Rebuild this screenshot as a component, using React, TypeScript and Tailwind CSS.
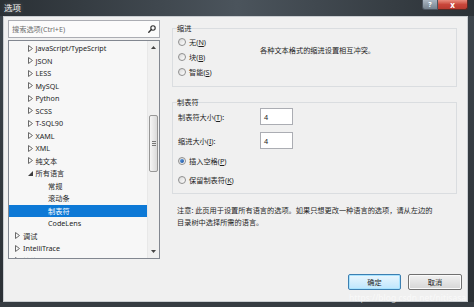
import React from 'react';

type Row = { text: string; level: number; arrow?: 'closed' | 'open'; selected?: boolean };

const rows: Row[] = [
  { text: 'JavaScript/TypeScript', level: 1, arrow: 'closed' },
  { text: 'JSON', level: 1, arrow: 'closed' },
  { text: 'LESS', level: 1, arrow: 'closed' },
  { text: 'MySQL', level: 1, arrow: 'closed' },
  { text: 'Python', level: 1, arrow: 'closed' },
  { text: 'SCSS', level: 1, arrow: 'closed' },
  { text: 'T-SQL90', level: 1, arrow: 'closed' },
  { text: 'XAML', level: 1, arrow: 'closed' },
  { text: 'XML', level: 1, arrow: 'closed' },
  { text: '纯文本', level: 1, arrow: 'closed' },
  { text: '所有语言', level: 1, arrow: 'open' },
  { text: '常规', level: 2 },
  { text: '滚动条', level: 2 },
  { text: '制表符', level: 2, selected: true },
  { text: 'CodeLens', level: 2 },
  { text: '调试', level: 0, arrow: 'closed' },
  { text: 'IntelliTrace', level: 0, arrow: 'closed' },
  { text: '性能工具', level: 0, arrow: 'closed' },
];

const FONT = { fontFamily: '"Noto Sans", "Noto Sans CJK SC", sans-serif' };

const Arrow = ({ kind, selected }: { kind?: 'closed' | 'open'; selected?: boolean }) => {
  if (kind === 'closed') {
    return (
      <svg width="5" height="7" viewBox="0 0 5 7" className="shrink-0">
        <path d="M0.5 0.5 L4.5 3.5 L0.5 6.5 Z" fill="none" stroke={selected ? '#fff' : '#6a6a6a'} strokeWidth="1" />
      </svg>
    );
  }
  if (kind === 'open') {
    return (
      <svg width="5" height="5" viewBox="0 0 5 5" className="shrink-0">
        <path d="M5 0 L5 5 L0 5 Z" fill="#3c3c3c" />
      </svg>
    );
  }
  return <span className="w-[5px] shrink-0" />;
};

const Radio = ({ checked }: { checked?: boolean }) => (
  <span className="relative flex h-[8px] w-[8px] shrink-0 items-center justify-center rounded-full border border-[#8f8f8f] bg-gradient-to-br from-[#d8d8d8] to-[#ffffff]">
    {checked && <span className="h-[4px] w-[4px] rounded-full bg-gradient-to-br from-[#5fa0e6] to-[#1c4f9b]" />}
  </span>
);

const RadioRow = ({ label, mnemonic, checked, className }: { label: string; mnemonic: string; checked?: boolean; className?: string }) => (
  <div className={`flex h-[15px] items-center gap-[3px] ${className ?? ''}`}>
    <Radio checked={checked} />
    <span>
      {label}(<span className="underline">{mnemonic}</span>)
    </span>
  </div>
);

export default function App() {
  return (
    <div className="relative flex h-[307px] w-[474px] flex-col overflow-hidden bg-[#2f353b] text-[7.2px] leading-[10px] text-[#1e1e1e]" style={FONT}>
      {/* title bar */}
      <div className="flex h-[16px] shrink-0 items-start justify-between bg-gradient-to-r from-[#2a3035] via-[#4b545c] to-[#2c3237]">
        <span className="pl-[4px] pt-[3px] text-[8.5px] leading-[10px] text-[#f2f2f2] [text-shadow:0_0_4px_rgba(255,255,255,0.35)]">选项</span>
        <div className="mr-[6px] flex h-[10px]">
          <div className="flex w-[16px] items-center justify-center rounded-bl-[3px] border border-t-0 border-[#4c5560] bg-gradient-to-b from-[#aab6c2] to-[#76838f] text-[7px] font-bold leading-none text-white">?</div>
          <div className="flex w-[30px] items-center justify-center rounded-br-[3px] border border-l-0 border-t-0 border-[#5a2a25] bg-gradient-to-b from-[#e88c7e] via-[#c9463a] to-[#b83a2f] text-[8px] font-bold leading-none text-white">x</div>
        </div>
      </div>

      <div className="flex h-[286px] shrink-0">
        <div className="w-[3px] bg-gradient-to-b from-[#3e464d] to-[#2b3035]" />

        {/* client area */}
        <div className="flex w-[465px] border border-[#c9cdd1] bg-[#f0f0f0]">
          {/* left column */}
          <div className="ml-[4px] flex w-[152px] flex-col pt-[3px]">
            <div className="flex h-[18px] items-center justify-between border border-[#abadb3] bg-[#fbfbfb] pl-[3px] pr-[3px]">
              <span className="text-[#6d6d6d]">搜索选项(Ctrl+E)</span>
              <svg width="8" height="8" viewBox="0 0 8 8">
                <circle cx="5" cy="3" r="2.2" fill="none" stroke="#2f2f2f" strokeWidth="1.1" />
                <path d="M3.4 4.6 L0.8 7.2" stroke="#2f2f2f" strokeWidth="1.4" strokeLinecap="round" />
              </svg>
            </div>
            <div className="mt-[2px] flex h-[219px] border border-[#828790] bg-[#f7f7f7]">
              <div className="flex flex-1 flex-col overflow-hidden pt-[1px]">
                {rows.map((r, i) => (
                  <div
                    key={i}
                    className={`flex h-[12.5px] shrink-0 items-center gap-[3px] ${r.selected ? 'bg-[#0d79d6] text-white' : ''}`}
                    style={{ paddingLeft: 6 + r.level * 12.5 }}
                  >
                    <Arrow kind={r.arrow} selected={r.selected} />
                    <span className="whitespace-nowrap">{r.text}</span>
                  </div>
                ))}
              </div>
              {/* scrollbar */}
              <div className="flex w-[12px] flex-col items-center border-l border-[#e8e8e8] bg-[#f0f0f0]">
                <svg width="5" height="3" viewBox="0 0 5 3" className="mt-[5px]">
                  <path d="M0 3 L2.5 0 L5 3 Z" fill="#444" />
                </svg>
                <div className="mt-[66px] flex h-[57px] w-[9px] flex-col items-center justify-center gap-[1px] rounded-[2px] border border-[#979797] bg-gradient-to-r from-[#f6f6f6] to-[#dadada]">
                  <span className="h-px w-[4px] bg-[#777]" />
                  <span className="h-px w-[4px] bg-[#777]" />
                  <span className="h-px w-[4px] bg-[#777]" />
                </div>
                <div className="flex-1" />
                <svg width="5" height="3" viewBox="0 0 5 3" className="mb-[5px]">
                  <path d="M0 0 L2.5 3 L5 0 Z" fill="#444" />
                </svg>
              </div>
            </div>
          </div>

          {/* right column */}
          <div className="ml-[12px] flex w-[290px] flex-col pt-[6px] pb-[11px]">
            <fieldset className="h-[64px] w-[285px] border border-[#dadde0] px-[4px]">
              <legend className="px-0 leading-[10px]">缩进</legend>
              <div className="flex pl-[1px]">
                <div className="flex w-[82px] flex-col pt-[1.5px]">
                  <RadioRow label="无" mnemonic="N" className="h-[15.5px]" />
                  <RadioRow label="块" mnemonic="B" className="h-[15.5px]" />
                  <RadioRow label="智能" mnemonic="S" className="h-[15.5px]" />
                </div>
                <div className="pt-[12px]">各种文本格式的缩进设置相互冲突。</div>
              </div>
            </fieldset>

            <fieldset className="mt-[10px] h-[97px] w-[285px] border border-[#dadde0] px-[4px]">
              <legend className="px-0 leading-[10px]">制表符</legend>
              <div className="flex flex-col pl-[1px]">
                <div className="mt-[1px] flex h-[17px] items-center">
                  <span className="w-[82px]">
                    制表符大小(<span className="underline">T</span>):
                  </span>
                  <div className="flex h-[17px] w-[33px] items-center border border-[#abadb3] bg-white pl-[3px]">4</div>
                </div>
                <div className="mt-[7px] flex h-[17px] items-center">
                  <span className="w-[82px]">
                    缩进大小(<span className="underline">I</span>):
                  </span>
                  <div className="flex h-[17px] w-[33px] items-center border border-[#abadb3] bg-white pl-[3px]">4</div>
                </div>
                <RadioRow label="插入空格" mnemonic="P" checked className="mt-[4.5px]" />
                <RadioRow label="保留制表符" mnemonic="K" className="mt-[4px]" />
              </div>
            </fieldset>

            <div className="mt-[10px] pl-[5px] leading-[12px]">
              <div>注意: 此页用于设置所有语言的选项。如果只想更改一种语言的选项，请从左边的</div>
              <div>目录树中选择所需的语言。</div>
            </div>

            <div className="flex-1" />

            <div className="flex justify-end gap-[7px]">
              <button className="flex h-[16px] w-[53px] items-center justify-center rounded-[2px] border border-[#3c7fb1] bg-gradient-to-b from-[#eaf6fd] to-[#bee6fd] shadow-[inset_0_0_0_1px_#a8e3ff]">确定</button>
              <button className="flex h-[16px] w-[54px] items-center justify-center rounded-[2px] border border-[#707070] bg-gradient-to-b from-[#f2f2f2] to-[#d6d6d6] shadow-[inset_0_0_0_1px_#fbfbfb]">取消</button>
            </div>
          </div>
        </div>

        <div className="w-[6px] bg-gradient-to-b from-[#3e464d] to-[#2b3035]" />
      </div>

      <div className="h-[5px] shrink-0 bg-[#363c42]" />

      <span className="absolute bottom-[4px] right-[8px] text-[8.5px] leading-[10px] text-white/60">https://blog.csdn.net/nitisasa</span>
    </div>
  );
}
